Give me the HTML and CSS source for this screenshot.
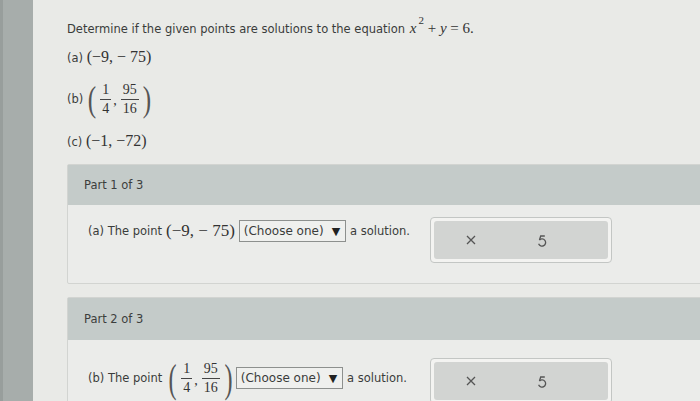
FILE: index.html
```html
<!DOCTYPE html>
<html>
<head>
<meta charset="utf-8">
<link rel="stylesheet" href="styles.css">
</head>
<body>
<div class="strip"></div>
<main class="main">
  <p class="title">Determine if the given points are solutions to the equation <span class="math eq"><i>x</i><sup>2</sup> + <i>y</i> = 6.</span></p>
  <p class="item item-a">(a) <span class="math">(−9, − 75)</span></p>
  <div class="item item-b">(b) <span class="math frac-group"><span class="paren">(</span><span class="frac"><span class="num">1</span><span class="den">4</span></span><span class="comma">,</span><span class="frac"><span class="num">95</span><span class="den">16</span></span><span class="paren">)</span></span></div>
  <p class="item item-c">(c) <span class="math">(−1, −72)</span></p>

  <section class="part part-1">
    <div class="part-head">Part 1 of 3</div>
    <div class="part-body">
      <div class="answer answer-a">(a) The point <span class="math">(−9, − 75)</span><span class="select">(Choose one) <span class="caret">▼</span></span>a solution.</div>
      <div class="tools">
        <div class="tools-inner">
          <svg class="icon-x" width="12" height="12" viewBox="0 0 12 12"><path d="M2 2 L10 10 M10 2 L2 10" stroke="#555" stroke-width="1.3" fill="none"/></svg>
          <svg class="icon-undo" width="12" height="14" viewBox="0 0 12 14"><path d="M3.45 6.95 A3.6 3.6 0 1 1 2.62 10.73" stroke="#555" stroke-width="1.3" fill="none"/><path d="M8.8 3 H4.7 L3.45 6.95" stroke="#555" stroke-width="1.3" fill="none"/></svg>
        </div>
      </div>
    </div>
  </section>

  <section class="part part-2">
    <div class="part-head">Part 2 of 3</div>
    <div class="part-body">
      <div class="answer answer-b">(b) The point <span class="math frac-group"><span class="paren">(</span><span class="frac"><span class="num">1</span><span class="den">4</span></span><span class="comma">,</span><span class="frac"><span class="num">95</span><span class="den">16</span></span><span class="paren">)</span></span><span class="select">(Choose one) <span class="caret">▼</span></span>a solution.</div>
      <div class="tools">
        <div class="tools-inner">
          <svg class="icon-x" width="12" height="12" viewBox="0 0 12 12"><path d="M2 2 L10 10 M10 2 L2 10" stroke="#555" stroke-width="1.3" fill="none"/></svg>
          <svg class="icon-undo" width="12" height="14" viewBox="0 0 12 14"><path d="M3.45 6.95 A3.6 3.6 0 1 1 2.62 10.73" stroke="#555" stroke-width="1.3" fill="none"/><path d="M8.8 3 H4.7 L3.45 6.95" stroke="#555" stroke-width="1.3" fill="none"/></svg>
        </div>
      </div>
    </div>
  </section>
</main>
</body>
</html>
```

FILE: styles.css
```css
html, body {
  margin: 0;
  padding: 0;
  height: 100%;
  overflow: hidden;
}
body {
  display: flex;
  background: #e9eae7;
  font-family: "DejaVu Sans", Verdana, sans-serif;
  font-size: 11.5px;
  color: #3a3c3b;
}
.strip {
  width: 33px;
  flex: none;
  background: #a7adab;
  border-left: 3px solid #989e9c;
  box-sizing: border-box;
}
.main {
  flex: 1;
  padding: 0 0 0 34px;
  min-width: 700px;
}
p { margin: 0; }
.math {
  font-family: "Liberation Serif", "Times New Roman", serif;
  font-size: 16px;
  color: #333;
}
.eq {
  font-size: 15px;
  margin-left: 1px;
}
.eq sup {
  font-size: 11px;
  position: relative;
  top: -3px;
  margin-left: 2px;
}
.title {
  margin-top: 12px;
  line-height: 22px;
}
.item-a {
  margin-top: 7px;
  line-height: 20px;
}
.item-b {
  margin-top: 13px;
  display: flex;
  align-items: center;
  gap: 3px;
}
.frac-group {
  display: inline-flex;
  align-items: center;
}
.paren {
  font-size: 36px;
  line-height: 36px;
  transform: scaleX(0.7);
  color: #555;
}
.frac {
  display: inline-flex;
  flex-direction: column;
  align-items: center;
  font-size: 14px;
  line-height: 16px;
  margin: 0 2px;
}
.num {
  border-bottom: 1px solid #444;
  padding: 0 2px 1px;
}
.den {
  padding-top: 1px;
}
.comma {
  font-size: 14px;
  align-self: flex-end;
  margin: 0 2px 8px 0;
}
.item-c {
  margin-top: 14px;
  line-height: 20px;
}
.part {
  width: 660px;
  border: 1px solid #d2d4d1;
  border-radius: 2px;
  background: #ebecea;
}
.part-1 { margin-top: 12px; }
.part-2 { margin-top: 13px; }
.part-head {
  background: #c4cbc9;
  height: 40px;
  padding-left: 16px;
  display: flex;
  align-items: center;
  color: #3c3e3d;
}
.part-2 .part-head {
  height: 42px;
}
.part-body {
  display: grid;
  grid-template-columns: 342px auto;
  padding-left: 20px;
}
.part-1 .part-body {
  height: 78px;
  padding-top: 12px;
  box-sizing: border-box;
}
.part-2 .part-body {
  padding-top: 16px;
}
.answer {
  display: flex;
  align-items: center;
  white-space: nowrap;
}
.answer .math {
  margin-left: 4px;
}
.answer-a {
  height: 22px;
  margin-top: 3px;
}
.answer-a .math {
  font-size: 17px;
}
.answer-b {
  height: 44px;
  margin-top: 0;
}
.answer-b .paren {
  font-size: 39px;
  line-height: 39px;
  transform: scaleX(0.62);
}
.answer-b .comma {
  margin-bottom: 9px;
}
.select {
  display: inline-flex;
  align-items: center;
  height: 20px;
  padding: 0 5px 0 4px;
  margin: 0 4px 0 4px;
  border: 1px solid #8d908e;
  background: #eff0ee;
  gap: 8px;
  font-size: 12px;
}
.answer-b .select {
  margin-left: 1px;
}
.caret {
  font-size: 11px;
  color: #222;
}
.tools {
  width: 182px;
  height: 46px;
  border: 1px solid #c3c6c4;
  border-radius: 4px;
  background: #f3f3f1;
  padding: 3px;
  box-sizing: border-box;
}
.part-2 .tools {
  margin-top: 2px;
}
.tools-inner {
  height: 100%;
  background: #d2d4d2;
  border-radius: 3px;
  display: flex;
  align-items: center;
  padding-left: 31px;
  gap: 59px;
}
```
